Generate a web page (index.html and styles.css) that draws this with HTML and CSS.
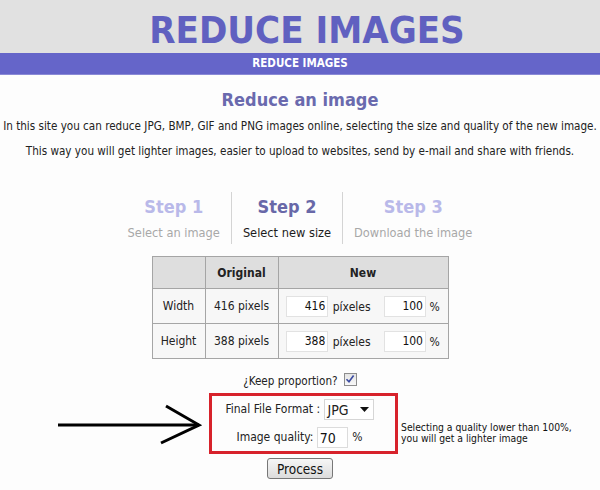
FILE: index.html
```html
<!DOCTYPE html>
<html lang="en">
<head>
<meta charset="utf-8">
<title>Reduce images</title>
<link rel="stylesheet" href="styles.css">
</head>
<body>
<header class="top">
  <h1 class="logo">REDUCE IMAGES</h1>
</header>
<nav class="bar">REDUCE IMAGES</nav>
<main class="content">
  <h2 class="title">Reduce an image</h2>
  <p class="intro">In this site you can reduce JPG, BMP, GIF and PNG images online, selecting the size and quality of the new image.</p>
  <p class="intro second">This way you will get lighter images, easier to upload to websites, send by e-mail and share with friends.</p>

  <div class="steps">
    <div class="step">
      <div class="step-name">Step 1</div>
      <div class="step-desc">Select an image</div>
    </div>
    <div class="step active">
      <div class="step-name">Step 2</div>
      <div class="step-desc">Select new size</div>
    </div>
    <div class="step">
      <div class="step-name">Step 3</div>
      <div class="step-desc">Download the image</div>
    </div>
  </div>

  <table class="sizes">
    <thead>
      <tr><th class="c1"></th><th class="c2">Original</th><th class="c3">New</th></tr>
    </thead>
    <tbody>
      <tr>
        <td>Width</td>
        <td>416 pixels</td>
        <td class="new"><input class="num" type="text" value="416"> píxeles <input class="pct" type="text" value="100"> %</td>
      </tr>
      <tr>
        <td>Height</td>
        <td>388 pixels</td>
        <td class="new"><input class="num" type="text" value="388"> píxeles <input class="pct" type="text" value="100"> %</td>
      </tr>
    </tbody>
  </table>

  <div class="keep">¿Keep proportion? <span class="check"><svg width="10" height="10" viewBox="0 0 10 10"><path d="M1.5 5.2 L4 7.8 L8.6 1.6" fill="none" stroke="#3a4aa0" stroke-width="1.6"/></svg></span></div>

  <div class="format-row">
    <div class="arrow-cell">
      <svg class="arrow" width="209" height="60" viewBox="0 0 209 60"><path d="M58 32 H199" stroke="#000" stroke-width="3"/><path d="M166 13 L199 32 L161 50" fill="none" stroke="#000" stroke-width="3"/></svg>
    </div>
    <div class="box">
      <div class="box-line">Final File Format : <span class="select">JPG <svg width="9" height="5" viewBox="0 0 9 5"><path d="M0 0 H9 L4.5 5 Z" fill="#111"/></svg></span></div>
      <div class="box-line q">Image quality: <input class="quality" type="text" value="70"> <span class="pc">%</span></div>
    </div>
    <div class="note">Selecting a quality lower than 100%,<br>you will get a lighter image</div>
  </div>

  <div class="actions"><button class="process" type="button">Process</button></div>
</main>
</body>
</html>
```
FILE: styles.css
```css
html, body {
  margin: 0;
  padding: 0;
}
body {
  background: #fdfdfd;
  font-family: "DejaVu Sans Condensed", "DejaVu Sans", sans-serif;
  font-size: 11.6px;
  color: #222;
  width: 600px;
  overflow: hidden;
}
.top {
  background: #e1e1e1;
  height: 53px;
  display: flex;
  justify-content: center;
  align-items: center;
}
.logo {
  margin: 0;
  padding: 6px 0 0 14px;
  font-family: "DejaVu Sans Condensed", "DejaVu Sans", sans-serif;
  font-weight: bold;
  font-size: 38px;
  color: #6060c0;
}
.bar {
  background: #6565c9;
  height: 21px;
  line-height: 21px;
  color: #fff;
  font-weight: bold;
  font-size: 11.5px;
  text-align: center;
  border-bottom: 1px solid #8a8ad6;
}
.content {
  text-align: center;
}
.title {
  margin: 14px 0 0;
  font-size: 18px;
  line-height: 22px;
  font-weight: bold;
  color: #6a6aae;
}
.intro {
  margin: 8px 0 0;
  line-height: 14px;
  color: #222;
}
.intro.second {
  margin-top: 11px;
}
.steps {
  display: flex;
  justify-content: center;
  margin-top: 34px;
}
.step {
  padding: 4px 11px 4px;
  color: #a8a8a8;
}
.step + .step {
  border-left: 1px solid #d4d4d4;
}
.step-name {
  font-size: 18px;
  font-weight: bold;
  line-height: 22px;
  color: #b9b9e9;
}
.step-desc {
  margin-top: 8px;
  line-height: 14px;
  font-size: 12.7px;
}
.step.active .step-name {
  color: #6868a8;
}
.step.active .step-desc {
  color: #1c1c1c;
}
.sizes {
  margin: 12px auto 0;
  border-collapse: collapse;
  background: #f7f7f7;
  font-size: 12px;
}
.sizes th, .sizes td {
  border: 1px solid #a5a5a5;
  padding: 0 7px;
  text-align: center;
}
.sizes th {
  background: #dedede;
  height: 31px;
  font-weight: bold;
}
.sizes td {
  height: 34px;
}
.sizes .c1 { width: 38px; }
.sizes .c2 { width: 58px; }
.sizes .c3 { width: 155px; }
.sizes td.new {
  white-space: nowrap;
}
input {
  font-family: "DejaVu Sans Condensed", "DejaVu Sans", sans-serif;
  font-size: 12px;
  color: #111;
  background: #fff;
  border: 1px solid #e2e2e2;
  box-sizing: border-box;
  height: 21px;
  padding: 0 2px;
  text-align: right;
  outline: none;
}
input.num, input.pct {
  width: 42px;
}
input.num {
  margin-right: 1px;
}
input.pct {
  margin-left: 10px;
}
.keep {
  margin-top: 14px;
  line-height: 16px;
}
.check {
  display: inline-block;
  width: 11px;
  height: 11px;
  border: 1px solid #8d8d8d;
  background: linear-gradient(#e4e4e4, #f8f8f8);
  vertical-align: -1px;
  margin-left: 3px;
  position: relative;
}
.check svg {
  position: absolute;
  left: 0;
  top: 0;
}
.format-row {
  display: grid;
  grid-template-columns: 209px 189px 1fr;
  align-items: start;
  margin-top: 4px;
}
.arrow-cell {
  height: 61px;
}
.arrow {
  display: block;
  margin-top: 0;
}
.box {
  border: 3px solid #d7222b;
  box-sizing: border-box;
  height: 61px;
  padding-top: 1px;
  font-size: 12px;
}
.box-line {
  height: 24px;
  line-height: 24px;
  padding-right: 8px;
}
.box-line.q {
  margin-top: 4px;
}
.select {
  display: inline-flex;
  align-items: center;
  justify-content: space-between;
  box-sizing: border-box;
  width: 50px;
  height: 21px;
  border: 1px solid #d6d6d6;
  background: #fff;
  padding: 0 4px 0 3px;
  font-size: 14px;
  vertical-align: middle;
  text-align: left;
}
input.quality {
  width: 31px;
  font-size: 14px;
  text-align: left;
  vertical-align: middle;
  border-color: #dcdcdc;
}
.pc {
  margin-left: 1px;
}
.note {
  text-align: left;
  font-size: 10.3px;
  line-height: 11px;
  padding: 29px 0 0 3px;
  color: #111;
  white-space: nowrap;
}
.actions {
  margin-top: 4px;
}
.process {
  font-family: "DejaVu Sans Condensed", "DejaVu Sans", sans-serif;
  font-size: 13.5px;
  width: 66px;
  height: 21px;
  padding: 0;
  border: 1px solid #777;
  border-radius: 3px;
  background: linear-gradient(#f6f6f6, #dcdcdc);
  color: #111;
}
```
